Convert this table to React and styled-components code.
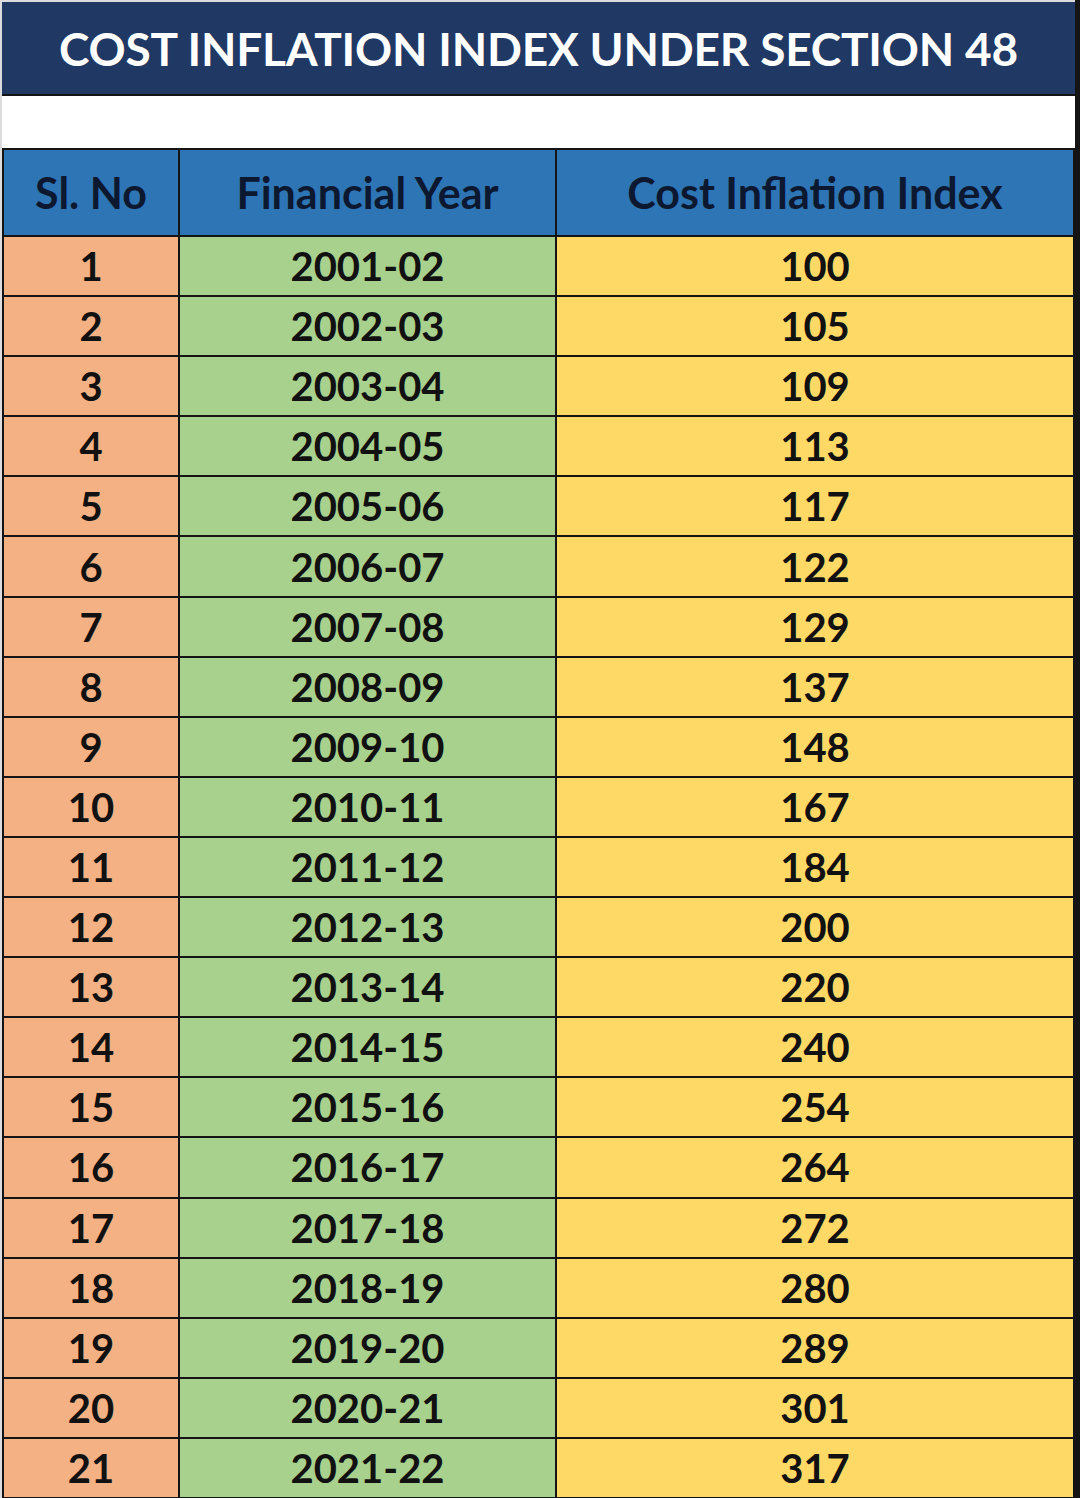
import React from 'react';
import styled, { createGlobalStyle } from 'styled-components';

const rows = [
	['2001-02', 100], ['2002-03', 105], ['2003-04', 109], ['2004-05', 113],
	['2005-06', 117], ['2006-07', 122], ['2007-08', 129], ['2008-09', 137],
	['2009-10', 148], ['2010-11', 167], ['2011-12', 184], ['2012-13', 200],
	['2013-14', 220], ['2014-15', 240], ['2015-16', 254], ['2016-17', 264],
	['2017-18', 272], ['2018-19', 280], ['2019-20', 289], ['2020-21', 301],
	['2021-22', 317],
];

const Color = {
	navy: '#1f3864',
	blue: '#2e75b6',
	salmon: '#f4b183',
	green: '#a9d18e',
	yellow: '#ffd966',
	line: '#141414',
};

export default function App (){
		return(
			<>
				<Global/>
				<Sheet>
					<Title>COST INFLATION INDEX UNDER SECTION 48</Title>
					<Spacer/>
					<Table>
						<Head>Sl. No</Head>
						<Head>Financial Year</Head>
						<Head>Cost Inflation Index</Head>
						{rows.map(([year, index], i) => (
							<React.Fragment key={year}>
								<Cell bg={Color.salmon}>{i + 1}</Cell>
								<Cell bg={Color.green}>{year}</Cell>
								<Cell bg={Color.yellow}>{index}</Cell>
							</React.Fragment>
						))}
					</Table>
				</Sheet>
			</>
		);
}

const Global = createGlobalStyle`
	html, body{
		margin: 0;
		padding: 0;
		background: #dcdcdc;
		font-family: Lato, "Open Sans", sans-serif;
	}
`

const Sheet = styled.div`
	width: 1080px;
	height: 1498px;
	overflow: hidden;
	box-sizing: border-box;
	padding: 2px 5px 0 2px;
	background: linear-gradient(to right, #dcdcdc 0, #dcdcdc 1075px, ${Color.line} 1075px);
`

const Title = styled.div`
	height: 92px;
	display: flex;
	align-items: center;
	justify-content: center;
	background: ${Color.navy};
	color: #fff;
	font-weight: 700;
	font-size: 46px;
	letter-spacing: -0.2px;
	border-bottom: 2px solid ${Color.line};
`

const Spacer = styled.div`
	height: 52px;
	background: #fff;
`

const Table = styled.div`
	display: grid;
	grid-template-columns: 174px 375px 1fr;
	grid-template-rows: 85px;
	grid-auto-rows: 58.1px;
	gap: 2px;
	background: ${Color.line};
	border-top: 2px solid ${Color.line};
	border-left: 2px solid ${Color.line};
	border-right: 2px solid ${Color.line};
	padding-bottom: 2px;
`

const Head = styled.div`
	display: flex;
	align-items: center;
	justify-content: center;
	background: ${Color.blue};
	color: #0c1830;
	font-weight: 700;
	font-size: 43px;
`

const Cell = styled.div`
	display: flex;
	align-items: center;
	justify-content: center;
	background: ${p => p.bg};
	color: #111;
	font-weight: 700;
	font-size: 40px;
`
